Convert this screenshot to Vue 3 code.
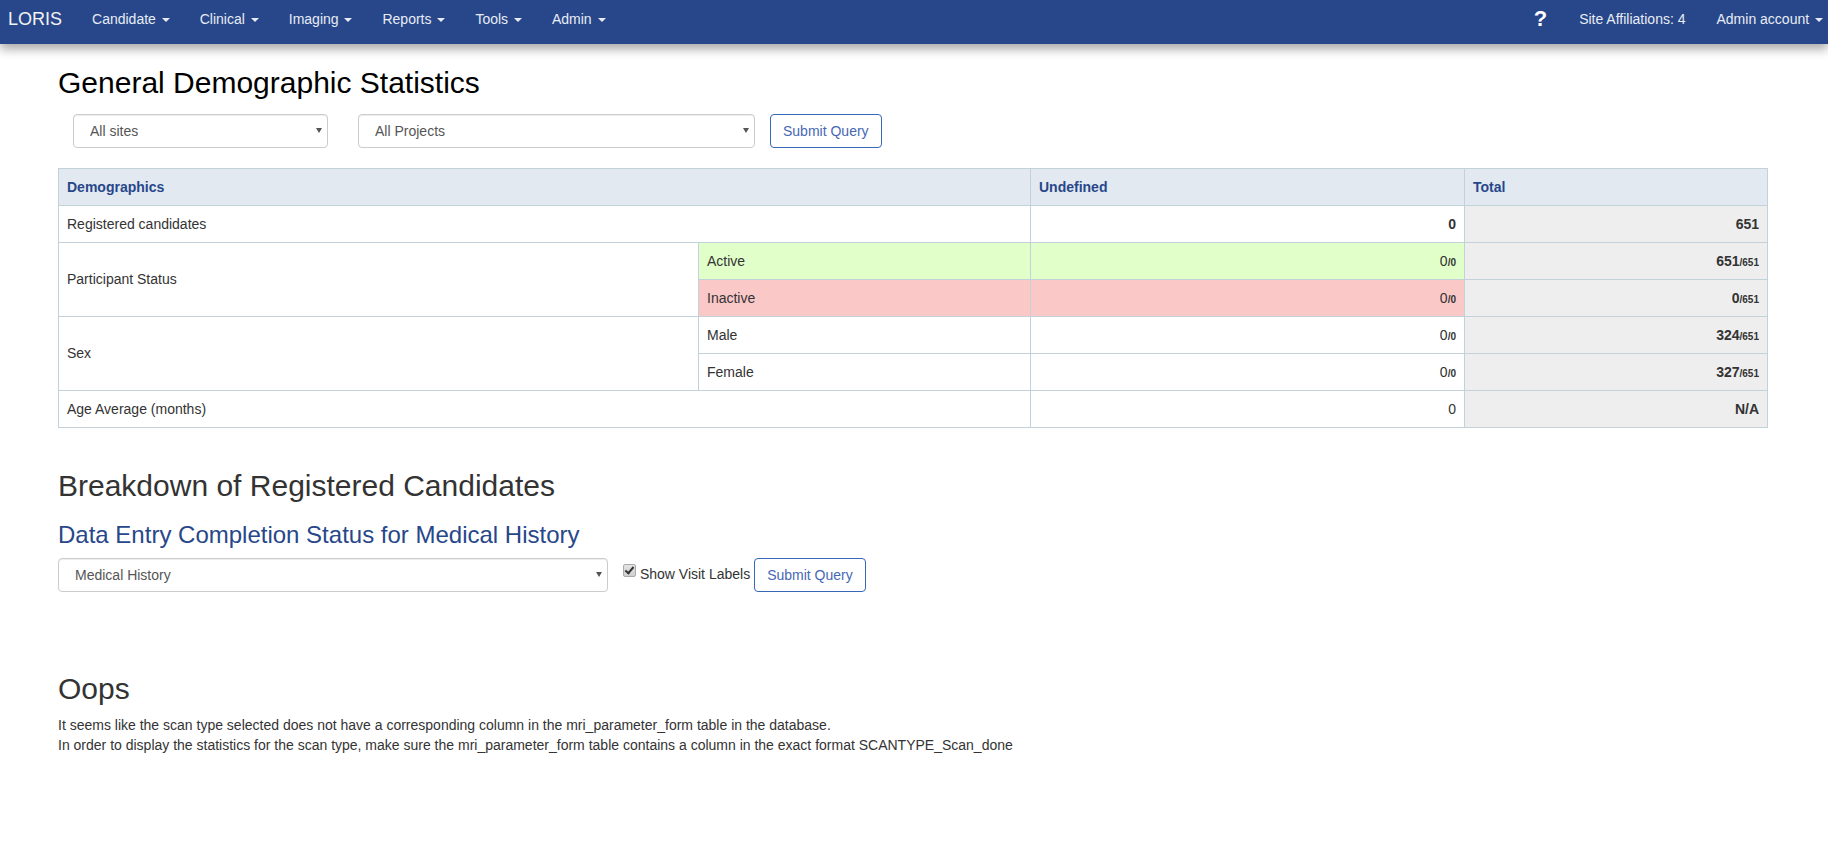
<template>
  <nav class="navbar">
    <a class="brand">LORIS</a>
    <ul class="nav-left">
      <li v-for="item in menu" :key="item">{{ item }} <span class="caret"></span></li>
    </ul>
    <ul class="nav-right">
      <li class="help">?</li>
      <li class="sites">Site Affiliations: 4</li>
      <li class="account">Admin account <span class="caret"></span></li>
    </ul>
  </nav>

  <main class="page">
    <h1>General Demographic Statistics</h1>
    <form class="filters" @submit.prevent>
      <span class="select site-select">
        <select class="control"><option>All sites</option></select>
      </span>
      <span class="select project-select">
        <select class="control"><option>All Projects</option></select>
      </span>
      <button class="btn">Submit Query</button>
    </form>

    <table class="stats">
      <colgroup>
        <col class="c1" />
        <col class="c2" />
        <col class="c3" />
        <col class="c4" />
      </colgroup>
      <thead>
        <tr>
          <th colspan="2">Demographics</th>
          <th>Undefined</th>
          <th>Total</th>
        </tr>
      </thead>
      <tbody>
        <tr>
          <td colspan="2">Registered candidates</td>
          <td class="num"><b>0</b></td>
          <td class="num total">651</td>
        </tr>
        <tr>
          <td rowspan="2">Participant Status</td>
          <td class="active">Active</td>
          <td class="num active">0<small>/0</small></td>
          <td class="num total">651<small>/651</small></td>
        </tr>
        <tr>
          <td class="inactive">Inactive</td>
          <td class="num inactive">0<small>/0</small></td>
          <td class="num total">0<small>/651</small></td>
        </tr>
        <tr>
          <td rowspan="2">Sex</td>
          <td>Male</td>
          <td class="num">0<small>/0</small></td>
          <td class="num total">324<small>/651</small></td>
        </tr>
        <tr>
          <td>Female</td>
          <td class="num">0<small>/0</small></td>
          <td class="num total">327<small>/651</small></td>
        </tr>
        <tr>
          <td colspan="2">Age Average (months)</td>
          <td class="num">0</td>
          <td class="num total">N/A</td>
        </tr>
      </tbody>
    </table>

    <h2 class="breakdown">Breakdown of Registered Candidates</h2>
    <h3>Data Entry Completion Status for Medical History</h3>
    <form class="instrument" @submit.prevent>
      <span class="select instrument-select">
        <select class="control"><option>Medical History</option></select>
      </span>
      <label class="visit-labels"><input type="checkbox" checked /> Show Visit Labels</label>
      <button class="btn">Submit Query</button>
    </form>

    <h2 class="oops">Oops</h2>
    <p>It seems like the scan type selected does not have a corresponding column in the mri_parameter_form table in the database.</p>
    <p>In order to display the statistics for the scan type, make sure the mri_parameter_form table contains a column in the exact format SCANTYPE_Scan_done</p>
  </main>
</template>

<script setup>
const menu = ['Candidate', 'Clinical', 'Imaging', 'Reports', 'Tools', 'Admin']
</script>

<style>
html,
body {
  margin: 0;
  background: #fff;
}
</style>

<style scoped>
.navbar {
  display: flex;
  align-items: flex-start;
  height: 44px;
  padding-top: 9px;
  box-sizing: border-box;
  background-color: #27478a;
  color: #fff;
  font: 14px/20px "Liberation Sans", Arial, sans-serif;
  box-shadow: 0 5px 10px rgba(0, 0, 0, 0.35);
}
.brand {
  margin-left: 8px;
  font-size: 18px;
  color: #f2f2f2;
}
ul {
  display: flex;
  list-style: none;
  margin: 0;
  padding: 0;
}
.nav-left {
  margin-left: 15px;
}
.nav-left li {
  padding: 0 15px;
  color: #e8ecf4;
}
.nav-right {
  margin-left: auto;
  color: #e8ecf4;
}
.nav-right li {
  padding: 0 15px;
}
.nav-right .help {
  padding: 0;
  margin-right: 17px;
  font-size: 22px;
  font-weight: bold;
  color: #fff;
}
.nav-right .sites {
  padding-right: 16px;
}
.nav-right .account {
  padding-right: 5px;
}
.caret {
  display: inline-block;
  width: 0;
  height: 0;
  margin-left: 2px;
  vertical-align: middle;
  border-top: 4px solid;
  border-right: 4px solid transparent;
  border-left: 4px solid transparent;
}
.page {
  padding: 0 60px 0 58px;
  font: 14px/20px "Liberation Sans", Arial, sans-serif;
  color: #333;
}
h1,
h2 {
  font-size: 30px;
  font-weight: 500;
  line-height: 33px;
  margin: 0;
}
h1 {
  margin-top: 22px;
  color: #000;
}
.filters {
  display: flex;
  margin: 15px 0 20px 15px;
}
.select {
  position: relative;
  display: block;
  height: 34px;
}
.select::after {
  content: "";
  position: absolute;
  top: 14px;
  right: 6px;
  border-top: 5px solid #555;
  border-right: 3px solid transparent;
  border-left: 3px solid transparent;
  pointer-events: none;
}
.control {
  display: block;
  width: 100%;
  height: 34px;
  padding: 6px 12px 6px 16px;
  font: 14px/20px "Liberation Sans", Arial, sans-serif;
  color: #555;
  background-color: #fff;
  border: 1px solid #ccc;
  border-radius: 4px;
  box-shadow: inset 0 1px 1px rgba(0, 0, 0, 0.075);
  box-sizing: border-box;
  appearance: none;
}
.site-select {
  width: 255px;
  margin-right: 30px;
}
.project-select {
  width: 397px;
  margin-right: 15px;
}
.btn {
  height: 34px;
  padding: 6px 12px;
  font: 14px/20px "Liberation Sans", Arial, sans-serif;
  color: #4767b5;
  background: #fff;
  border: 1px solid #3568b5;
  border-radius: 4px;
  box-sizing: border-box;
}
.stats {
  width: 1709px;
  table-layout: fixed;
  border-collapse: collapse;
}
.c1 {
  width: 640px;
}
.c2 {
  width: 332px;
}
.c3 {
  width: 434px;
}
.c4 {
  width: 303px;
}
th,
td {
  height: 37px;
  padding: 8px;
  box-sizing: border-box;
  border: 1px solid #c3d2da;
  text-align: left;
}
td[rowspan] {
  padding-bottom: 10px;
}
th {
  background-color: #e3e9f1;
  color: #27478a;
}
.num {
  text-align: right;
}
.total {
  background-color: #eee;
  font-weight: bold;
}
.active {
  background-color: #e1ffc8;
}
.inactive {
  background-color: #fbc8c8;
}
small {
  font-size: 10px;
  line-height: 1;
  font-weight: bold;
}
.breakdown {
  margin-top: 41px;
}
h3 {
  margin: 20px 0 10px;
  font-size: 24px;
  font-weight: 500;
  line-height: 26px;
  color: #27478a;
}
.instrument {
  display: flex;
}
.instrument-select {
  width: 550px;
  margin-right: 15px;
}
.visit-labels {
  display: block;
  margin-top: 6px;
  margin-right: 4px;
  white-space: nowrap;
}
.visit-labels input {
  appearance: none;
  position: relative;
  display: inline-block;
  width: 13px;
  height: 13px;
  margin: 0;
  vertical-align: 2px;
  background: linear-gradient(#e4e4e4, #cfcfcf);
  border: 1px solid #aaa;
  border-radius: 2px;
  box-sizing: border-box;
}
.visit-labels input::after {
  content: "";
  position: absolute;
  left: 3px;
  top: 0;
  width: 3px;
  height: 7px;
  border: solid #333;
  border-width: 0 2px 2px 0;
  transform: rotate(40deg);
}
.oops {
  margin-top: 80px;
  margin-bottom: 10px;
}
p {
  margin: 0;
}
</style>
